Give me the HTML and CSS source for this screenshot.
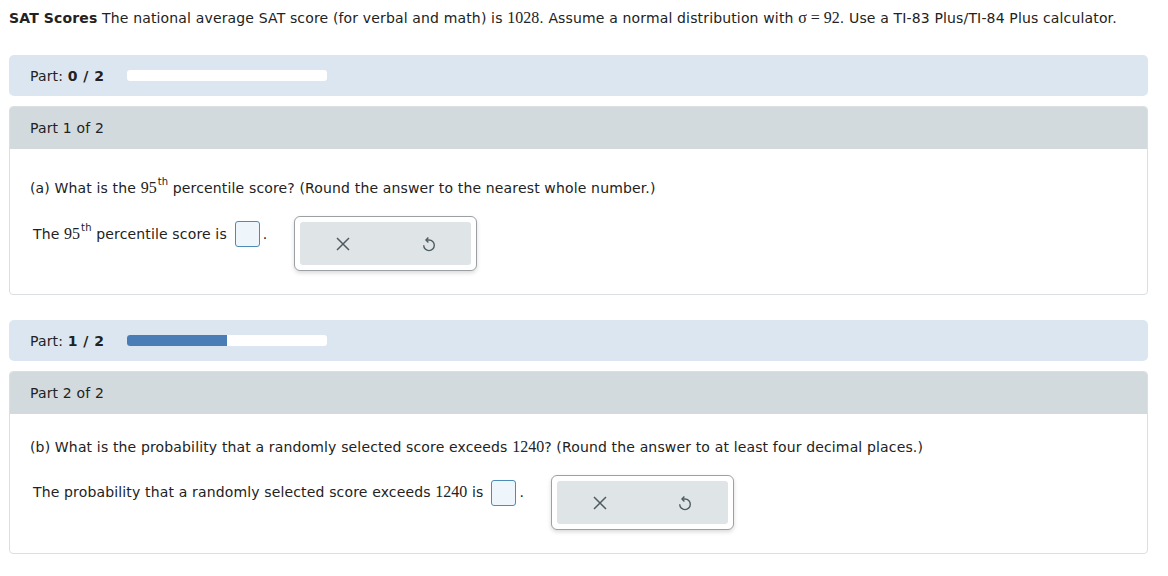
FILE: index.html
```html
<!DOCTYPE html>
<html>
<head>
<meta charset="utf-8">
<link rel="stylesheet" href="styles.css">
</head>
<body>
<div class="page">
  <p class="intro"><b>SAT Scores</b> The national average SAT score (for verbal and math) is <span class="m">1028</span>. Assume a normal distribution with <span class="m">σ = 92</span>. Use a TI-83 Plus/TI-84 Plus calculator.</p>

  <div class="partbar">
    <span class="plabel">Part: <b>0 / 2</b></span>
    <div class="prog"><div class="fill" style="width:0%"></div></div>
  </div>
  <div class="card">
    <div class="card-head">Part 1 of 2</div>
    <div class="card-body">
      <p class="q hs">(a) What is the <span class="m">95</span><sup>th</sup> percentile score? (Round the answer to the nearest whole number.)</p>
      <div class="ans">
        <span class="atext hs">The <span class="m">95</span><sup>th</sup> percentile score is</span>
        <span class="box"></span><span class="dot hs">.</span>
        <div class="tools">
          <div class="tools-in">
            <svg class="ic" width="16" height="16" viewBox="0 0 16 16"><path d="M2 2 L14 14 M14 2 L2 14" stroke="#4e5b62" stroke-width="1.5" fill="none"/></svg>
            <svg class="ic" width="16" height="16" viewBox="0 0 16 16"><path d="M5.5 4 H8 A5.3 5.3 0 1 1 2.7 9.3" stroke="#4e5b62" stroke-width="1.4" fill="none"/><path d="M7.4 1.6 L5 4 L7.4 6.4" stroke="#4e5b62" stroke-width="1.4" fill="none"/></svg>
          </div>
        </div>
      </div>
    </div>
  </div>

  <div class="partbar second">
    <span class="plabel">Part: <b>1 / 2</b></span>
    <div class="prog"><div class="fill" style="width:50%"></div></div>
  </div>
  <div class="card">
    <div class="card-head">Part 2 of 2</div>
    <div class="card-body">
      <p class="q">(b) What is the probability that a randomly selected score exceeds <span class="m">1240</span>? (Round the answer to at least four decimal places.)</p>
      <div class="ans">
        <span class="atext">The probability that a randomly selected score exceeds <span class="m">1240</span> is</span>
        <span class="box"></span><span class="dot">.</span>
        <div class="tools">
          <div class="tools-in">
            <svg class="ic" width="16" height="16" viewBox="0 0 16 16"><path d="M2 2 L14 14 M14 2 L2 14" stroke="#4e5b62" stroke-width="1.5" fill="none"/></svg>
            <svg class="ic" width="16" height="16" viewBox="0 0 16 16"><path d="M5.5 4 H8 A5.3 5.3 0 1 1 2.7 9.3" stroke="#4e5b62" stroke-width="1.4" fill="none"/><path d="M7.4 1.6 L5 4 L7.4 6.4" stroke="#4e5b62" stroke-width="1.4" fill="none"/></svg>
          </div>
        </div>
      </div>
    </div>
  </div>
</div>
</body>
</html>
```

FILE: styles.css
```css
html, body { margin: 0; padding: 0; background: #fff; }
body {
  font-family: "DejaVu Sans", Verdana, sans-serif;
  font-size: 14px;
  letter-spacing: 0.15px;
  color: #222;
}
.page { padding: 0 20px 0 9px; }
.intro { margin: 0; padding-top: 9px; line-height: 18px; height: 46px; }
.m { font-family: "Liberation Serif", "Times New Roman", serif; font-size: 16px; line-height: 14px; letter-spacing: 0; }
sup { font-size: 10px; line-height: 10px; vertical-align: 0; position: relative; top: -8px; margin-left: 1px; }
.partbar {
  background: #dce6f0;
  border-radius: 5px;
  height: 41px;
  display: flex;
  align-items: center;
  padding-left: 21px;
  gap: 22px;
}
.partbar b { letter-spacing: 0.5px; }
.prog {
  width: 200px; height: 11px; background: #fff; border-radius: 3px; overflow: hidden;
}
.fill { height: 100%; background: #4a7db5; }
.card {
  margin-top: 10px;
  border: 1px solid #dcdfe1;
  border-radius: 4px;
  overflow: hidden;
}
.second { margin-top: 25px; }
.card-head {
  background: #d3dade;
  height: 42px;
  display: flex;
  align-items: center;
  padding-left: 20px;
}
.card-body { padding: 23px 20px 23px 20px; }
.q { margin: 0; line-height: 20px; height: 20px; }
.q.hs { padding-top: 6px; }
.ans { display: flex; align-items: flex-start; margin-top: 18px; padding-left: 3px; }
.atext { margin-top: 7px; line-height: 20px; }
.atext.hs { margin-top: 8px; }
.box {
  width: 23px; height: 24px; border: 1px solid #4c8cb4; border-radius: 3px;
  background: #eef6fc; margin-left: 8px; margin-top: 5px;
}
.dot { margin-top: 7px; line-height: 20px; margin-left: 3px; }
.dot.hs { margin-top: 8px; }
.tools {
  margin-left: 27px;
  border: 1px solid #9aa0a4;
  border-radius: 6px;
  padding: 5px;
  box-shadow: 0 2px 4px rgba(0,0,0,0.15);
  background: #fff;
}
.tools-in {
  width: 171px; height: 43px; background: #dfe5e7; border-radius: 3px;
  display: flex; align-items: center; justify-content: space-around;
}
.ic { display: block; }
```
